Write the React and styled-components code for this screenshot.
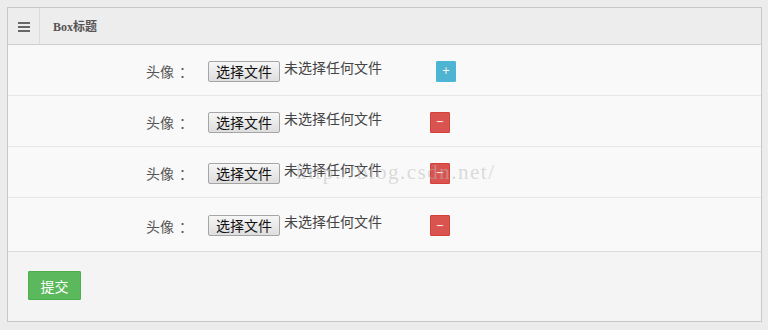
import React from "react";
import styled, { createGlobalStyle } from "styled-components";

const Global = createGlobalStyle`
  html, body { margin: 0; padding: 0; background: #ececec; }
  body { font-family: "Noto Sans CJK SC", "Noto Sans", sans-serif; }
`;

const Page = styled.div`
  padding: 7px 6px 8px 7px;
`;

const Box = styled.div`
  position: relative;
  border: 1px solid #c8c8c8;
  background: #f9f9f9;
`;

const Header = styled.div`
  display: flex;
  height: 36px;
  background: #ededed;
  border-bottom: 1px solid #cfcfcf;
`;

const IconCell = styled.div`
  width: 31px;
  border-right: 1px solid #dcdcdc;
  display: flex;
  align-items: center;
  justify-content: center;
  padding-top: 1px;
`;

const Title = styled.div`
  display: flex;
  align-items: center;
  padding-left: 13px;
  font-family: "Liberation Serif", "Noto Sans CJK SC", serif;
  font-weight: bold;
  font-size: 12px;
  color: #555;
`;

const Row = styled.div`
  box-sizing: border-box;
  display: flex;
  align-items: center;
  height: ${(p) => p.$h}px;
  padding-top: 2px;
  border-bottom: ${(p) => (p.$last ? "none" : "1px solid #e6e6e6")};
`;

const Label = styled.div`
  width: 182px;
  padding-left: 138px;
  box-sizing: border-box;
  margin-right: 18px;
  font-size: 14px;
  color: #555;
  white-space: pre;
`;

const Colon = styled.span`
  display: inline-block;
  margin-left: 5px;
`;

const FileWidget = styled.div`
  display: flex;
  align-items: flex-start;
  width: ${(p) => p.$w}px;
`;

const FileButton = styled.button`
  font-family: "Noto Sans CJK SC", sans-serif;
  font-size: 14px;
  color: #111;
  width: 72px;
  height: 21px;
  padding: 0;
  line-height: 19px;
  border: 1px solid #a5a5a5;
  border-radius: 2px;
  background: linear-gradient(#f6f6f6, #dedede);
`;

const FileText = styled.span`
  font-size: 14px;
  color: #444;
  margin-left: 4px;
  line-height: 14px;
  margin-top: -1px;
`;

const ActionButton = styled.button`
  width: 20px;
  height: 21px;
  padding: 0;
  border: 1px solid ${(p) => (p.$kind === "add" ? "#46b8da" : "#d43f3a")};
  background: ${(p) => (p.$kind === "add" ? "#4fb3d2" : "#d9534f")};
  color: #fff;
  font-size: 10px;
  line-height: 18px;
  font-family: "DejaVu Sans", sans-serif;
  border-radius: 1px;
`;

const Footer = styled.div`
  height: 70px;
  background: #f4f4f4;
  border-top: 1px solid #dcdcdc;
  padding: 19px 0 0 20px;
  box-sizing: border-box;
`;

const Submit = styled.button`
  width: 53px;
  height: 29px;
  background: #5cb85c;
  border: 1px solid #4cae4c;
  color: #fff;
  font-family: "Noto Sans CJK SC", sans-serif;
  font-size: 14px;
  padding: 0;
  border-radius: 1px;
`;

const Watermark = styled.div`
  position: absolute;
  left: 288px;
  top: 152px;
  font-family: "Liberation Serif", serif;
  font-size: 21px;
  letter-spacing: 1.5px;
  color: rgba(185, 185, 185, 0.5);
  pointer-events: none;
`;

const Menu = () => (
  <svg width="12" height="10" viewBox="0 0 12 10">
    <rect x="0" y="0" width="12" height="2" fill="#666" />
    <rect x="0" y="4" width="12" height="2" fill="#666" />
    <rect x="0" y="8" width="12" height="2" fill="#666" />
  </svg>
);

const rows = [
  { kind: "add", w: 228, h: 51 },
  { kind: "del", w: 222, h: 51 },
  { kind: "del", w: 222, h: 51 },
  { kind: "del", w: 222, h: 53, last: true },
];

export default function App() {
  return (
    <>
      <Global />
      <Page>
        <Box>
          <Header>
            <IconCell>
              <Menu />
            </IconCell>
            <Title>Box标题</Title>
          </Header>
          {rows.map((r, i) => (
            <Row key={i} $h={r.h} $last={r.last}>
              <Label>
                头像<Colon>：</Colon>
              </Label>
              <FileWidget $w={r.w}>
                <FileButton>选择文件</FileButton>
                <FileText>未选择任何文件</FileText>
              </FileWidget>
              <ActionButton $kind={r.kind}>{r.kind === "add" ? "+" : "−"}</ActionButton>
            </Row>
          ))}
          <Footer>
            <Submit>提交</Submit>
          </Footer>
          <Watermark>http://blog.csdn.net/</Watermark>
        </Box>
      </Page>
    </>
  );
}
